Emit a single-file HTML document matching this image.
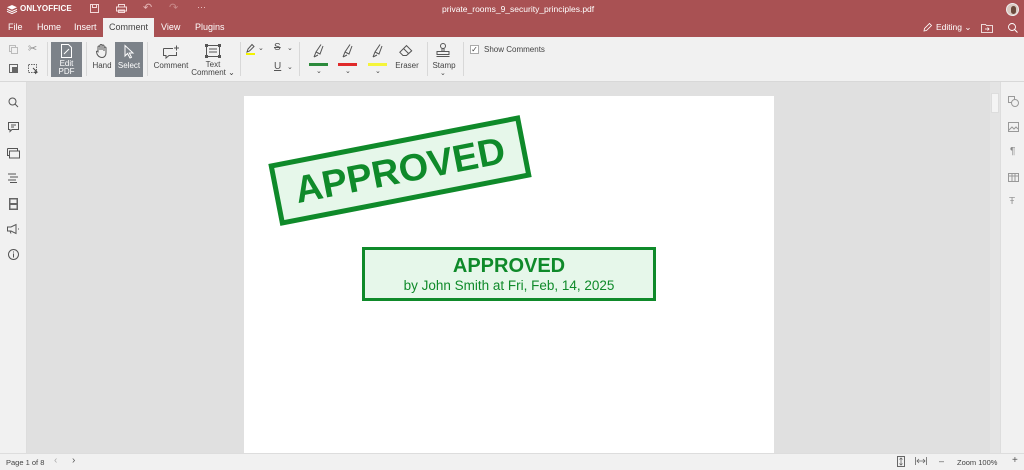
<!DOCTYPE html>
<html><head><meta charset="utf-8">
<style>
*{margin:0;padding:0;box-sizing:border-box}
body{width:1024px;height:470px;overflow:hidden;font-family:"Liberation Sans",Arial,sans-serif;background:#e0e0e0;position:relative;font-size:8px;color:#444}
.a{position:absolute}
#top{left:0;top:0;width:1024px;height:37px;background:#a95153}
.w{color:#fff}
.tab{position:absolute;top:18px;height:19px;line-height:19px;color:#fff;font-size:9px}
#tb{left:0;top:37px;width:1024px;height:45px;background:#f1f1f1;border-bottom:1px solid #d8d8d8}
.lbl{position:absolute;font-size:8px;color:#444;text-align:center}
.sep{position:absolute;top:42px;width:1px;height:34px;background:#d8d8d8}
svg{position:absolute;overflow:visible}
.ic{fill:none;stroke:#555;stroke-width:1}
</style></head><body>
<div id="top" class="a"></div>
<svg style="left:7px;top:5px" width="10" height="9" viewBox="0 0 10 9"><path d="M5 0L10 2.3 5 4.6 0 2.3Z" fill="#fff"/><path d="M0 4.3L5 6.6 10 4.3M0 6.3L5 8.6 10 6.3" stroke="#fff" fill="none" stroke-width="1"/></svg>
<div class="a w" style="left:20px;top:4px;font-size:8px;font-weight:bold;letter-spacing:0.1px">ONLYOFFICE</div>
<svg style="left:90px;top:4px" width="9" height="9"><rect x="0.5" y="0.5" width="8" height="8" fill="none" stroke="#f3d9d9"/><rect x="2.5" y="0.5" width="4" height="3" fill="none" stroke="#f3d9d9"/></svg>
<svg style="left:116px;top:4px" width="11" height="9"><rect x="0.5" y="3" width="10" height="4" fill="none" stroke="#f3d9d9"/><rect x="2.5" y="0.5" width="6" height="2.5" fill="none" stroke="#f3d9d9"/><rect x="2.5" y="6" width="6" height="2.5" fill="none" stroke="#f3d9d9"/></svg>
<div class="a" style="left:143px;top:1px;font-size:11px;color:#e6b7b7">↶</div>
<div class="a" style="left:169px;top:1px;font-size:11px;color:#c98a8a">↷</div>
<div class="a" style="left:197px;top:2px;font-size:9px;color:#f0caca">···</div>
<div class="a w" style="left:442px;top:4px;font-size:8.5px">private_rooms_9_security_principles.pdf</div>
<div class="a" style="left:1006px;top:3px;width:13px;height:13px;border-radius:50%;background:#d9c9c0;border:1px solid #eee"><div style="margin:2px 0 0 4px;width:5px;height:8px;background:#6b4a3c;border-radius:3px"></div></div>
<div class="tab" style="left:8px">File</div>
<div class="tab" style="left:37px">Home</div>
<div class="tab" style="left:74px">Insert</div>
<div class="tab" style="left:103px;width:51px;background:#f1f1f1;color:#444;text-align:center">Comment</div>
<div class="tab" style="left:161px">View</div>
<div class="tab" style="left:195px">Plugins</div>
<svg style="left:923px;top:23px" width="9" height="9"><path d="M1 8L1.5 5.5 6.5 0.5 8.5 2.5 3.5 7.5Z" fill="none" stroke="#fff" stroke-width="0.8"/></svg>
<div class="tab" style="left:936px;font-size:8.5px">Editing ⌄</div>
<svg style="left:981px;top:23px" width="12" height="10"><path d="M0.5 1.5H4.5L5.5 2.5H11.5V9.5H0.5Z" fill="none" stroke="#fff" stroke-width="0.8"/><path d="M4 6H8M6.5 4.5L8 6 6.5 7.5" fill="none" stroke="#fff" stroke-width="0.8"/></svg>
<svg style="left:1008px;top:23px" width="10" height="10"><circle cx="4" cy="4" r="3.5" fill="none" stroke="#fff" stroke-width="0.9"/><path d="M6.5 6.5L9.5 9.5" stroke="#fff"/></svg>

<div id="tb" class="a"></div>
<svg style="left:9px;top:45px" width="9" height="9"><rect x="0.5" y="0.5" width="6" height="6" class="ic" style="stroke:#bbb"/><rect x="2.5" y="2.5" width="6" height="6" fill="#f1f1f1" stroke="#bbb"/></svg>
<div class="a" style="left:28px;top:42px;font-size:11px;color:#888">✂</div>
<svg style="left:9px;top:64px" width="9" height="9"><rect x="0.5" y="0.5" width="8" height="8" fill="none" stroke="#666"/><rect x="3" y="3" width="5" height="5" fill="#666"/></svg>
<svg style="left:28px;top:64px" width="10" height="10"><rect x="0.5" y="0.5" width="8" height="8" fill="none" stroke="#666" stroke-dasharray="1.5 1"/><path d="M5 4L9 8 7 8 8 10" stroke="#444" fill="none"/></svg>
<div class="sep" style="left:47px"></div>
<div class="a" style="left:51px;top:42px;width:31px;height:35px;background:#7c8289"></div>
<svg style="left:61px;top:44px" width="11" height="14"><path d="M0.5 0.5H7.5L10.5 3.5V13.5H0.5Z" fill="none" stroke="#fff"/><path d="M3 10L8 5" stroke="#fff"/></svg>
<div class="lbl" style="left:51px;top:60px;width:31px;color:#fff;line-height:8px">Edit<br>PDF</div>
<div class="sep" style="left:86px"></div>
<svg style="left:96px;top:44px" width="11" height="14"><path d="M2 7V3a1 1 0 0 1 2 0V6V1.5a1 1 0 0 1 2 0V6V2a1 1 0 0 1 2 0V7V4a1 1 0 0 1 2 0V9c0 3-2 4.5-4 4.5S2 12 1 10L0.5 7.5a1 1 0 0 1 1.5 0Z" class="ic"/></svg>
<div class="lbl" style="left:90px;top:61px;width:24px">Hand</div>
<div class="a" style="left:115px;top:42px;width:28px;height:35px;background:#7c8289"></div>
<svg style="left:124px;top:45px" width="10" height="14"><path d="M1 0.5V11L3.5 8.5 6 13 7.5 12.3 5.3 8H9Z" fill="none" stroke="#fff"/></svg>
<div class="lbl" style="left:115px;top:61px;width:28px;color:#fff">Select</div>
<div class="sep" style="left:147px"></div>
<svg style="left:163px;top:45px" width="16" height="13"><path d="M0.5 3.5H10M13.5 7V10.5H6L3 13V10.5H0.5V3.5" class="ic"/><path d="M11 3H16M13.5 0.5V5.5" class="ic"/></svg>
<div class="lbl" style="left:152px;top:61px;width:38px">Comment</div>
<svg style="left:205px;top:44px" width="16" height="14"><rect x="1.5" y="1.5" width="13" height="11" class="ic"/><rect x="0" y="0" width="3" height="3" fill="#555"/><rect x="13" y="0" width="3" height="3" fill="#555"/><rect x="0" y="11" width="3" height="3" fill="#555"/><rect x="13" y="11" width="3" height="3" fill="#555"/><path d="M4 5H12M4 8H12" class="ic"/></svg>
<div class="lbl" style="left:190px;top:61px;width:46px;line-height:8px">Text<br>Comment ⌄</div>
<div class="sep" style="left:240px"></div>
<svg style="left:246px;top:44px" width="10" height="12"><path d="M1 8L2 5 6 0.5 8 2.5 3.5 7Z" class="ic"/><rect x="0" y="9" width="9" height="2" fill="#f2f200"/></svg>
<div class="a" style="left:258px;top:44px;font-size:7px">⌄</div>
<div class="a" style="left:274px;top:42px;font-size:10px;color:#555;text-decoration:line-through">S</div>
<div class="a" style="left:287px;top:44px;font-size:7px">⌄</div>
<div class="a" style="left:274px;top:61px;font-size:10px;color:#555;text-decoration:underline">U</div>
<div class="a" style="left:287px;top:63px;font-size:7px">⌄</div>
<div class="sep" style="left:299px"></div>
<svg style="left:313px;top:44px" width="11" height="14"><path d="M1 13L3 8 8 0.5M3 8L7 10 10 2M1 13L5 11" class="ic"/></svg>
<div class="a" style="left:309px;top:63px;width:19px;height:3px;background:#2c8a3c"></div>
<div class="a" style="left:316px;top:67px;font-size:7px">⌄</div>
<svg style="left:342px;top:44px" width="11" height="14"><path d="M1 13L3 8 8 0.5M3 8L7 10 10 2M1 13L5 11" class="ic"/></svg>
<div class="a" style="left:338px;top:63px;width:19px;height:3px;background:#e02a2a"></div>
<div class="a" style="left:345px;top:67px;font-size:7px">⌄</div>
<svg style="left:372px;top:44px" width="11" height="14"><path d="M1 13L3 8 8 0.5M3 8L7 10 10 2M1 13L5 11" class="ic"/></svg>
<div class="a" style="left:368px;top:63px;width:19px;height:3px;background:#f5f53a"></div>
<div class="a" style="left:375px;top:67px;font-size:7px">⌄</div>
<svg style="left:399px;top:45px" width="14" height="11"><path d="M4 10.5L0.8 7.3 7.5 0.6 12.7 5.8 7.5 10.5ZM4.5 3.5L10 9" class="ic"/></svg>
<div class="lbl" style="left:392px;top:61px;width:30px">Eraser</div>
<div class="sep" style="left:427px"></div>
<svg style="left:436px;top:43px" width="14" height="15"><circle cx="7" cy="3" r="2.5" class="ic"/><path d="M6 5.5V8M8 5.5V8M1 8.5H13V11.5H1ZM0.5 13.5H13.5" class="ic"/></svg>
<div class="lbl" style="left:429px;top:61px;width:30px">Stamp</div>
<div class="a" style="left:440px;top:69px;font-size:7px">⌄</div>
<div class="sep" style="left:463px"></div>
<div class="a" style="left:470px;top:45px;width:9px;height:9px;border:1px solid #aaa;background:#fff;font-size:8px;line-height:7px;text-align:center">✓</div>
<div class="lbl" style="left:484px;top:45px">Show Comments</div>

<div class="a" style="left:0;top:82px;width:27px;height:371px;background:#f1f1f1;border-right:1px solid #ddd"></div>
<svg style="left:8px;top:97px" width="11" height="11"><circle cx="4.5" cy="4.5" r="3.5" class="ic"/><path d="M7 7L10 10" class="ic"/></svg>
<svg style="left:8px;top:122px" width="11" height="11"><path d="M0.5 0.5H10.5V7.5H4L2 9.5V7.5H0.5Z" class="ic"/><path d="M3 3H8M3 5H6" class="ic"/></svg>
<svg style="left:7px;top:148px" width="13" height="11"><path d="M0.5 0.5H10.5V3M0.5 0.5V7.5H2" class="ic"/><rect x="2.5" y="3" width="10" height="7" class="ic"/></svg>
<svg style="left:8px;top:173px" width="11" height="10"><path d="M0 1H8M2 4H10M0 7H8M2 9.5H9" class="ic"/></svg>
<svg style="left:9px;top:198px" width="9" height="12"><rect x="0" y="0" width="9" height="12" fill="#666"/><rect x="1.5" y="1.5" width="6" height="3.5" fill="#f1f1f1"/><rect x="1.5" y="7" width="6" height="3.5" fill="#f1f1f1"/></svg>
<svg style="left:7px;top:224px" width="12" height="10"><path d="M0.5 3H4L9 0.5V9.5L4 7H0.5ZM3 7L4 9.5M11 5H12" class="ic"/></svg>
<svg style="left:8px;top:249px" width="11" height="11"><circle cx="5.5" cy="5.5" r="5" class="ic"/><path d="M5.5 4.5V8.5M5.5 2.5V3.5" class="ic"/></svg>

<div class="a" style="left:990px;top:82px;width:10px;height:371px;background:#e4e4e4"></div>
<div class="a" style="left:991px;top:93px;width:8px;height:20px;background:#f4f4f4;border:1px solid #ddd"></div>
<div class="a" style="left:1000px;top:82px;width:24px;height:371px;background:#f1f1f1;border-left:1px solid #ddd"></div>
<svg style="left:1008px;top:96px" width="11" height="11"><rect x="0.5" y="0.5" width="6" height="6" class="ic" style="stroke:#999"/><circle cx="7" cy="7" r="3.5" fill="#f1f1f1" stroke="#999"/></svg>
<svg style="left:1008px;top:122px" width="11" height="10"><rect x="0.5" y="0.5" width="10" height="9" fill="none" stroke="#999"/><path d="M1 8L4 5 6 7 8 5 10 7" fill="none" stroke="#999"/></svg>
<div class="a" style="left:1010px;top:146px;font-size:10px;color:#888">¶</div>
<svg style="left:1008px;top:173px" width="11" height="9"><rect x="0.5" y="0.5" width="10" height="8" fill="none" stroke="#999"/><path d="M0.5 3H10.5M4 0.5V8.5M7 0.5V8.5" stroke="#999"/></svg>
<div class="a" style="left:1009px;top:196px;font-size:10px;color:#999">Ŧ</div>

<div class="a" style="left:244px;top:96px;width:530px;height:357px;background:#fff"></div>
<div class="a" style="left:272px;top:139px;width:256px;height:63px;background:#e6f7ea;border:5px solid #0f8a2a;transform:rotate(-11deg);transform-origin:center;color:#0f8a2a;font-weight:bold;font-size:38px;line-height:54px;text-align:center">APPROVED</div>
<div class="a" style="left:362px;top:247px;width:294px;height:54px;background:#e6f7ea;border:3px solid #0f8a2a;color:#0f8a2a;text-align:center">
<div style="font-weight:bold;font-size:20px;line-height:22px;margin-top:5px">APPROVED</div>
<div style="font-size:13.5px;line-height:17px">by John Smith at Fri, Feb, 14, 2025</div></div>

<div class="a" style="left:0;top:453px;width:1024px;height:17px;background:#f1f1f1;border-top:1px solid #ddd"></div>
<div class="a" style="left:6px;top:458px;font-size:7.5px;color:#444">Page 1 of 8</div>
<div class="a" style="left:54px;top:455px;font-size:10px;color:#aaa">‹</div>
<div class="a" style="left:72px;top:455px;font-size:10px;color:#555">›</div>
<svg style="left:897px;top:456px" width="8" height="11"><rect x="0.5" y="0.5" width="7" height="10" fill="none" stroke="#666"/><path d="M4 2V9M2.5 3.5L4 2 5.5 3.5M2.5 7.5L4 9 5.5 7.5" fill="none" stroke="#666" stroke-width="0.8"/></svg>
<svg style="left:915px;top:457px" width="12" height="8"><path d="M0.5 0V8M11.5 0V8M2 4H10M4 2L2 4 4 6M8 2L10 4 8 6" fill="none" stroke="#666" stroke-width="0.8"/></svg>
<div class="a" style="left:939px;top:456px;font-size:9px;color:#555">–</div>
<div class="a" style="left:957px;top:458px;font-size:7.5px;color:#444">Zoom 100%</div>
<div class="a" style="left:1012px;top:455px;font-size:10px;color:#555">+</div>
</body></html>
